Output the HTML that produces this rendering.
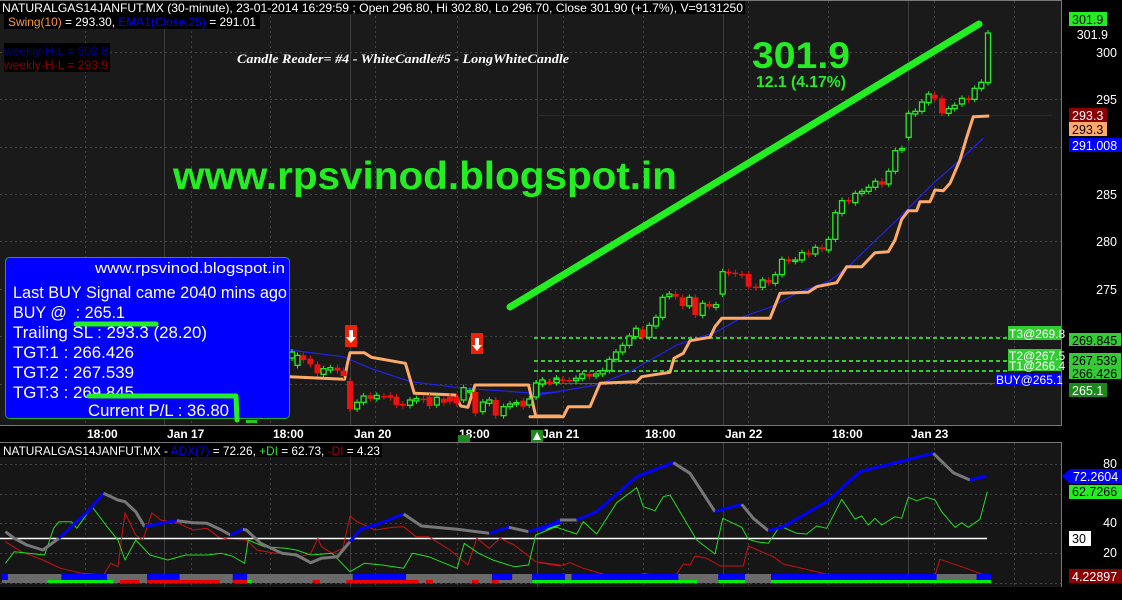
<!DOCTYPE html>
<html><head><meta charset="utf-8"><style>
html,body{margin:0;padding:0;background:#000;width:1122px;height:600px;overflow:hidden}
svg{display:block}
text{font-family:"Liberation Sans",Arial,sans-serif}
</style></head><body>
<svg id="s" width="1122" height="600" xmlns="http://www.w3.org/2000/svg">
<rect x="0" y="0" width="1122" height="600" fill="#000"/>
<rect x="0" y="1" width="1061" height="424" fill="#1a1a1a"/>
<rect x="0" y="443" width="1061" height="144" fill="#161616"/>
<g id="grid"></g>
<line x1="0" y1="0.5" x2="1061" y2="0.5" stroke="#777"/>
<line x1="1061.5" y1="0" x2="1061.5" y2="425" stroke="#777"/>
<line x1="1061.5" y1="443" x2="1061.5" y2="587" stroke="#777"/>
<line x1="0" y1="425.5" x2="1062" y2="425.5" stroke="#777"/>
<line x1="0" y1="442.5" x2="1062" y2="442.5" stroke="#777"/>

<g stroke="#33cc33" stroke-width="2" stroke-dasharray="4 3">
<line x1="534" y1="338" x2="1008" y2="338"/>
<line x1="534" y1="361" x2="1008" y2="361"/>
<line x1="534" y1="371" x2="1008" y2="371"/>
</g>
<line x1="534" y1="383.5" x2="1000" y2="383.5" stroke="#1a8a1a"/>
<line x1="537" y1="115.5" x2="1052" y2="115.5" stroke="#8b0000"/>

<g id="lines"></g>
<g id="candles"></g>

<line x1="510" y1="307" x2="979" y2="24" stroke="#22ee22" stroke-width="7" stroke-linecap="round"/>

<rect x="0" y="1" width="745" height="13" fill="#000"/>
<text x="2" y="12" font-size="12" fill="#fff" textLength="741" lengthAdjust="spacingAndGlyphs">NATURALGAS14JANFUT.MX (30-minute), 23-01-2014 16:29:59 ; Open 296.80, Hi 302.80, Lo 296.70, Close 301.90 (+1.7%), V=9131250</text>
<rect x="4" y="14" width="256" height="15" fill="#000"/>
<text x="8" y="26" font-size="12" fill="#fff" textLength="248" lengthAdjust="spacingAndGlyphs"><tspan fill="#ff9933">Swing(10)</tspan> = 293.30, <tspan fill="#0000ff">EMA1(Close,25)</tspan> = 291.01</text>
<rect x="4" y="43" width="106" height="29" fill="#000"/>
<text x="4" y="55" font-size="12" fill="#000099" textLength="104" lengthAdjust="spacingAndGlyphs">weekly-H-L = 302.8</text>
<text x="4" y="69" font-size="12" fill="#8b0000" textLength="104" lengthAdjust="spacingAndGlyphs">weekly-H-L = 293.9</text>
<text x="237" y="63" font-size="13" font-style="italic" font-weight="bold" fill="#fff" style="font-family:'Liberation Serif',serif" textLength="332" lengthAdjust="spacingAndGlyphs">Candle Reader= #4 - WhiteCandle#5 - LongWhiteCandle</text>

<text x="173" y="189" font-size="39" font-weight="bold" fill="#22ee22" textLength="504" lengthAdjust="spacingAndGlyphs">www.rpsvinod.blogspot.in</text>
<text x="752" y="68" font-size="37" font-weight="bold" fill="#22ee22" textLength="98" lengthAdjust="spacingAndGlyphs">301.9</text>
<text x="756" y="87" font-size="16" font-weight="bold" fill="#22ee22" textLength="90" lengthAdjust="spacingAndGlyphs">12.1 (4.17%)</text>

<rect x="5.5" y="257.5" width="284" height="161" rx="4" fill="#0000ff" stroke="#22aa22"/>
<g fill="#fff" font-size="17">
<text x="285" y="273" font-size="15" text-anchor="end" textLength="190" lengthAdjust="spacingAndGlyphs">www.rpsvinod.blogspot.in</text>
<text x="13" y="298" textLength="274" lengthAdjust="spacingAndGlyphs">Last BUY Signal came 2040 mins ago</text>
<text x="13" y="318" textLength="112" lengthAdjust="spacingAndGlyphs">BUY @&#160;&#160;: 265.1</text>
<text x="13" y="338" textLength="194" lengthAdjust="spacingAndGlyphs">Trailing SL : 293.3 (28.20)</text>
<text x="13" y="358" textLength="121" lengthAdjust="spacingAndGlyphs">TGT:1 : 266.426</text>
<text x="13" y="378" textLength="121" lengthAdjust="spacingAndGlyphs">TGT:2 : 267.539</text>
<text x="13" y="398" textLength="121" lengthAdjust="spacingAndGlyphs">TGT:3 : 269.845</text>
<text x="88" y="416" textLength="141" lengthAdjust="spacingAndGlyphs">Current P/L : 36.80</text>
</g>
<line x1="76" y1="324" x2="156" y2="324" stroke="#22ee22" stroke-width="5" stroke-linecap="round"/>
<polyline points="89,396 236,396 237,420" fill="none" stroke="#22ee22" stroke-width="5" stroke-linecap="round" stroke-linejoin="round"/>
<rect x="246" y="420" width="11" height="3" fill="#22cc22"/>

<rect x="345" y="325" width="12" height="22" fill="#ee2200"/>
<path d="M349 330h4v7h3l-5 6-5-6h3z" fill="#fff"/>
<rect x="471" y="333" width="12" height="21" fill="#ee2200"/>
<path d="M475 338h4v7h3l-5 6-5-6h3z" fill="#fff"/>

<rect x="0" y="426" width="1061" height="16" fill="#000"/>
<g fill="#fff" font-size="12" font-weight="bold">
<text x="87" y="438">18:00</text><text x="167" y="438">Jan 17</text>
<text x="273" y="438">18:00</text><text x="354" y="438">Jan 20</text>
<text x="459" y="438">18:00</text><text x="542" y="438">Jan 21</text>
<text x="645" y="438">18:00</text><text x="725" y="438">Jan 22</text>
<text x="832" y="438">18:00</text><text x="911" y="438">Jan 23</text>
</g>
<rect x="458" y="435" width="12" height="7" fill="#1a8a1a"/>
<rect x="531" y="430" width="12" height="12" fill="#1a8a1a"/>
<path d="M537 432l4 8h-8z" fill="#fff"/>

<rect x="1008" y="326" width="53" height="14" fill="#33cc33"/>
<text x="1009" y="338" font-size="12" fill="#fff">T3@269.8</text>
<rect x="1008" y="349" width="53" height="22" fill="#33cc33"/>
<text x="1009" y="360" font-size="12" fill="#fff">T2@267.5</text>
<text x="1009" y="370" font-size="12" fill="#fff">T1@266.4</text>
<rect x="995" y="373" width="66" height="12" fill="#0000ff"/>
<text x="996" y="384" font-size="12" fill="#fff">BUY@265.1</text>

<g font-size="12.5" fill="#fff" text-anchor="end">
<text x="1117" y="57">300</text><text x="1117" y="104">295</text>
<text x="1117" y="199">285</text><text x="1117" y="246">280</text><text x="1117" y="294">275</text>
<text x="1108" y="39">301.9</text>
</g>
<g font-size="12.5">
<rect x="1069" y="12" width="38" height="14" fill="#22ee22"/><text x="1072" y="24" fill="#000">301.9</text>
<rect x="1069" y="108" width="38" height="14" fill="#8b0000"/><text x="1072" y="120" fill="#fff">293.3</text>
<rect x="1069" y="122" width="38" height="14" fill="#ffaa66"/><text x="1072" y="134" fill="#000">293.3</text>
<rect x="1069" y="138" width="53" height="14" fill="#0000ff"/><text x="1072" y="150" fill="#fff">291.008</text>
<rect x="1069" y="333" width="52" height="13" fill="#33cc33"/><text x="1072" y="345" fill="#000">269.845</text>
<rect x="1069" y="353" width="52" height="13" fill="#33cc33"/><text x="1072" y="365" fill="#000">267.539</text>
<rect x="1069" y="366" width="52" height="13" fill="#33cc33"/><text x="1072" y="378" fill="#000">266.426</text>
<rect x="1069" y="383" width="38" height="14" fill="#1a8a1a"/><text x="1072" y="395" fill="#fff">265.1</text>
</g>

<rect x="0" y="443" width="382" height="14" fill="#000"/>
<text x="3" y="455" font-size="12" fill="#fff" textLength="377" lengthAdjust="spacingAndGlyphs">NATURALGAS14JANFUT.MX - <tspan fill="#0000ff">ADX(7)</tspan> = 72.26, <tspan fill="#22ee22">+DI</tspan> = 62.73, <tspan fill="#aa0000">-DI</tspan> = 4.23</text>
<g font-size="12.5" fill="#fff" text-anchor="end">
<text x="1117" y="468">80</text><text x="1117" y="527">40</text><text x="1117" y="557">20</text>
</g>
<g font-size="12.5">
<path d="M1062 476l8-7h52v15h-52z" fill="#0000ff"/><text x="1073" y="481" fill="#fff">72.2604</text>
<rect x="1069" y="485" width="53" height="14" fill="#22ee22"/><text x="1072" y="496" fill="#000">62.7266</text>
<rect x="1069" y="531" width="22" height="15" fill="#fff"/><text x="1072" y="543" fill="#000">30</text>
<rect x="1069" y="569" width="53" height="14" fill="#8b0000"/><text x="1072" y="581" fill="#fff">4.22897</text>
</g>
</svg>
<script>
var NS="http://www.w3.org/2000/svg";
function el(p,t,a){var e=document.createElementNS(NS,t);for(var k in a)e.setAttribute(k,a[k]);document.getElementById(p).appendChild(e);return e;}
var dotted=[85,191,270,375,457,563,643,748,828,934,1014],solid=[164,350,537,723,908];
dotted.forEach(function(x){el('grid','line',{x1:x+.5,y1:1,x2:x+.5,y2:425,stroke:'#444','stroke-dasharray':'2 3'});el('grid','line',{x1:x+.5,y1:443,x2:x+.5,y2:587,stroke:'#444','stroke-dasharray':'2 3'});});
solid.forEach(function(x){el('grid','line',{x1:x+.5,y1:1,x2:x+.5,y2:425,stroke:'#3d3d3d'});el('grid','line',{x1:x+.5,y1:443,x2:x+.5,y2:587,stroke:'#3d3d3d'});});
[52,99,147,194,241,289,336,384].forEach(function(y){el('grid','line',{x1:0,y1:y+.5,x2:1061,y2:y+.5,stroke:'#444','stroke-dasharray':'2 3'});});
[464,494,523,553,583].forEach(function(y){el('grid','line',{x1:0,y1:y+.5,x2:1061,y2:y+.5,stroke:'#444','stroke-dasharray':'2 3'});});
function pts(a,ox,sx,oy,sy){return a.map(function(p){return (ox+p[0]/sx).toFixed(1)+','+(oy+p[1]/sy).toFixed(1)}).join(' ');}
var ema2=[[810,300],[960,320],[1050,360],[1150,395],[1300,415],[1500,430],[1568,425]];
var ema6=[[0,1008],[200,975],[300,935],[440,855],[560,815],[640,770],[720,742],[800,700],[900,662],[960,615],[1100,480],[1210,370],[1290,300],[1360,235]];
el('lines','polyline',{points:pts(ema2,0,2.8,250,3)+' '+pts(ema6,530,3,60,3),fill:'none',stroke:'#2222ee','stroke-width':1.2});
var or2=[[810,380],[965,388],[972,345],[980,308],[1020,308],[1040,322],[1135,340],[1160,430],[1275,435],[1290,468],[1310,472],[1330,405],[1480,405],[1500,498],[1568,498]];
var or6=[[0,1070],[100,1070],[115,1040],[180,1040],[210,970],[320,965],[335,950],[420,937],[432,895],[460,880],[480,842],[540,832],[555,800],[575,775],[720,775],[750,700],[835,697],[860,680],[920,668],[950,620],[995,620],[1035,578],[1075,575],[1095,540],[1115,478],[1135,452],[1160,452],[1170,425],[1200,425],[1215,390],[1240,392],[1260,370],[1290,300],[1310,232],[1330,170],[1378,168]];
el('lines','polyline',{points:pts(or2,0,2.8,250,3)+' '+pts(or6,530,3,60,3),fill:'none',stroke:'#ffaa66','stroke-width':3,'stroke-linejoin':'round'});
function candle(x,t,b,c){var h=Math.max(b-t,1.5);
 el('candles','line',{x1:x,y1:t-3,x2:x,y2:b+3,stroke:c=='g'?'#22ee22':'#ee1111'});
 if(c=='g')el('candles','rect',{x:x-2.5,y:t,width:5,height:h,fill:'#1a1a1a',stroke:'#22ee22','stroke-width':1.3});
 else el('candles','rect',{x:x-3,y:t,width:6,height:h,fill:'#ee1111'});}
var c2=[[833,316,346,'g'],[849,316,330,'r'],[869,326,343,'r'],[889,343,370,'r'],[906,356,373,'g'],[925,353,360,'g'],[945,353,362,'r'],[962,362,378,'r'],[980,393,477,'r'],[1000,457,477,'g'],[1018,438,457,'g'],[1037,436,446,'r'],[1055,436,446,'g'],[1075,438,441,'r'],[1093,436,443,'r'],[1110,440,465,'r'],[1128,462,467,'r'],[1148,450,466,'g'],[1166,446,453,'g'],[1186,446,450,'r'],[1203,440,468,'r'],[1223,442,465,'g'],[1243,446,458,'r'],[1260,440,455,'r'],[1278,440,460,'r'],[1298,413,450,'g'],[1316,422,426,'g'],[1331,426,490,'r'],[1352,456,485,'g'],[1370,450,460,'g'],[1388,450,497,'r'],[1410,470,497,'g'],[1428,462,470,'g'],[1446,458,462,'g'],[1465,452,470,'r'],[1482,447,465,'g'],[1502,400,437,'g'],[1520,393,402,'g'],[1540,395,398,'r'],[1558,384,394,'g']];
c2.forEach(function(c){candle(c[0]/2.8,250+c[1]/3,250+c[2]/3,c[3]);});
var c6=[[37,960,972,'g'],[57,966,968,'r'],[80,958,968,'g'],[98,958,960,'r'],[118,960,962,'r'],[138,955,962,'g'],[157,942,955,'g'],[178,942,950,'r'],[198,942,948,'g'],[218,932,942,'g'],[238,898,932,'g'],[258,876,898,'g'],[278,856,876,'g'],[298,828,856,'g'],[318,805,830,'g'],[338,808,832,'r'],[358,796,832,'g'],[378,772,798,'g'],[398,712,772,'g'],[418,702,710,'g'],[437,702,710,'r'],[458,712,738,'r'],[478,712,738,'g'],[496,712,765,'r'],[518,730,766,'g'],[538,732,740,'r'],[558,734,742,'g'],[578,635,702,'g'],[596,635,640,'r'],[616,638,642,'r'],[636,642,646,'r'],[656,642,680,'r'],[678,680,683,'r'],[698,660,682,'g'],[716,660,668,'r'],[736,644,670,'g'],[756,598,644,'g'],[776,598,604,'r'],[796,600,604,'g'],[816,578,600,'g'],[836,578,584,'r'],[856,562,582,'g'],[876,562,568,'r'],[896,538,570,'g'],[916,458,538,'g'],[936,422,460,'g'],[956,420,424,'r'],[976,400,428,'g'],[996,394,400,'g'],[1016,382,394,'g'],[1036,364,382,'g'],[1056,364,374,'r'],[1076,334,372,'g'],[1096,272,334,'g'],[1116,266,270,'g'],[1136,160,232,'g'],[1156,154,162,'g'],[1176,126,154,'g'],[1196,102,128,'g'],[1214,104,116,'r'],[1236,115,160,'r'],[1256,146,160,'g'],[1274,136,146,'g'],[1296,115,132,'g'],[1316,115,120,'r'],[1334,85,118,'g'],[1354,67,85,'g'],[1374,-81,68,'g']];
candle(536,383,397,'g');
c6.forEach(function(c){candle(530+c[0]/3,60+c[1]/3,60+c[2]/3,c[3]);});
candle(292,352,358,'g');
var L='lines';
function lp(a5,a7,col,w){var s=(a5?pts(a5,0,2.8,440,3):'')+(a5&&a7?' ':'')+(a7?pts(a7,540,3,440,3):'');el(L,'polyline',{points:s,fill:'none',stroke:col,'stroke-width':w,'stroke-linejoin':'round'});}
el(L,'line',{x1:0,y1:538.5,x2:987,y2:538.5,stroke:'#fff','stroke-width':1.5});
lp([[15,305],[60,335],[120,360],[170,385],[230,400],[290,405],[310,370],[330,380],[350,218],[380,285],[400,300],[425,218],[450,240],[500,250],[540,270],[580,265],[610,290],[640,298],[690,300],[720,330],[770,340],[800,340],[840,350],[870,340],[890,295],[900,320],[930,340],[960,325],[980,228],[1000,245],[1050,270],[1100,262],[1130,260],[1165,290],[1200,290],[1260,330],[1310,375],[1335,295],[1370,325],[1400,295],[1440,315],[1500,365],[1568,375]],[[0,368],[60,378],[90,368],[130,385],[200,405],[290,415],[310,400],[400,418],[430,372],[450,375],[465,348],[500,355],[540,378],[610,378],[625,318],[700,350],[730,372],[850,400],[920,422],[980,415],[1030,405],[1100,418],[1180,422],[1200,358],[1270,382],[1340,408]],'#cc1111',1);
lp([[15,370],[40,335],[80,340],[125,345],[150,265],[165,245],[200,245],[215,265],[258,200],[300,260],[330,300],[350,360],[380,300],[420,345],[470,360],[520,345],[580,345],[620,340],[650,348],[685,370],[695,300],[740,320],[800,325],[830,330],[870,345],[930,340],[980,395],[1020,370],[1070,375],[1130,385],[1155,340],[1200,350],[1280,385],[1300,310],[1340,340],[1380,360],[1440,380],[1480,375],[1500,285],[1568,255]],[[0,270],[50,262],[110,282],[130,245],[170,282],[230,188],[290,143],[310,200],[345,212],[370,170],[390,165],[470,300],[525,342],[548,235],[605,262],[625,298],[650,305],[685,310],[720,258],[770,280],[800,282],[830,258],[860,265],[905,178],[945,237],[965,228],[985,255],[1005,235],[1025,255],[1065,230],[1085,235],[1105,172],[1130,182],[1160,172],[1185,180],[1205,215],[1245,262],[1265,248],[1285,262],[1320,238],[1342,155]],'#22dd22',1);
var G='#777',B='#0000ff';
lp([[15,275],[40,295],[75,315],[120,330],[165,295]],null,G,3);
lp([[165,295],[210,250],[250,210],[290,160]],null,B,3);
lp([[290,160],[330,180],[350,185],[380,215],[405,260]],null,G,3);
lp([[405,260],[450,250],[495,242]],null,B,3);
lp([[495,242],[540,248],[580,250],[620,270],[645,285]],null,G,3);
lp([[645,285],[680,268]],null,B,3);
lp([[680,268],[690,270],[730,310],[790,340],[830,345],[870,368],[900,355],[945,350],[980,305]],null,G,3);
lp([[980,305],[1010,268],[1060,252],[1130,222]],null,B,3);
lp([[1130,222],[1180,258],[1280,268],[1370,280]],null,G,3);
lp([[1370,280],[1425,262]],null,B,3);
lp([[1425,262],[1480,275]],null,G,3);
lp([[1480,275],[1568,245]],[[0,270],[60,240]],B,3);
lp(null,[[60,240],[110,240]],G,3);
lp(null,[[110,240],[170,215],[290,110],[400,68]],B,3);
lp(null,[[400,68],[450,100],[525,215]],G,3);
lp(null,[[525,215],[605,193]],B,3);
lp(null,[[605,193],[640,235],[685,272]],G,3);
lp(null,[[685,272],[730,260],[860,185],[960,95],[1100,60],[1180,40]],B,3);
lp(null,[[1180,40],[1240,98],[1290,120]],G,3);
lp(null,[[1290,120],[1340,108]],B,3);
function bars(list,ox,sx,y,h){list.forEach(function(b){el(L,'rect',{x:ox+b[0]/sx,y:y,width:(b[1]-b[0])/sx,height:h,fill:b[2]});});}
var g='#6a6a6a',bl='#0000ff',gr='#00ee00',rd='#ee0000';
bars([[5,22,bl],[22,172,g],[172,300,bl],[300,412,g],[412,503,bl],[503,652,g],[652,692,bl],[692,988,g],[988,1137,bl],[1137,1378,g],[1378,1434,bl],[1434,1490,g],[1490,1568,bl]],0,2.8,574,6);
bars([[0,75,bl],[75,95,g],[95,415,bl],[415,535,g],[535,615,bl],[615,693,g],[693,1190,bl],[1190,1310,g],[1310,1353,bl]],540,3,574,6);
bars([[5,132,g],[132,318,gr],[318,336,g],[336,390,rd],[390,412,g],[412,615,rd],[615,652,g],[652,692,rd],[692,706,gr],[706,876,g],[876,895,rd],[895,970,g],[970,1172,rd],[1172,1193,g],[1193,1212,rd],[1212,1322,g],[1322,1340,rd],[1340,1378,g],[1378,1396,rd],[1396,1490,g],[1490,1568,gr]],0,2.8,580,3);
bars([[0,473,gr],[473,535,g],[535,615,gr],[615,693,g],[693,1353,gr]],540,3,580,3);
</script>
</body></html>
